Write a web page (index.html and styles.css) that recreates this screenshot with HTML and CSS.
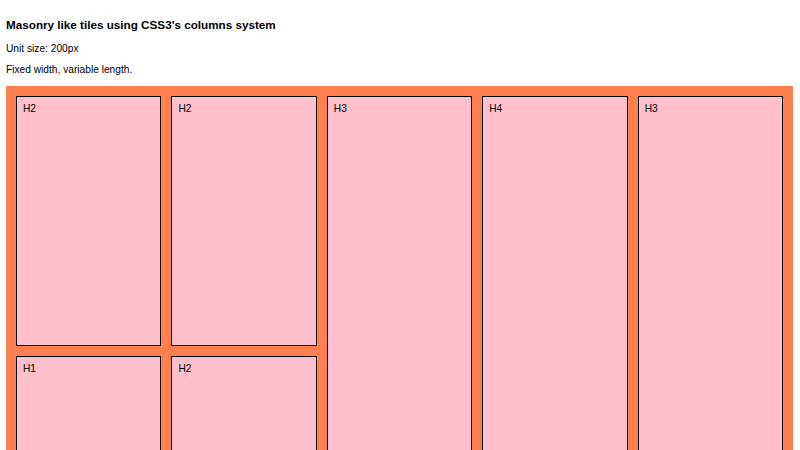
FILE: index.html
```html
<!DOCTYPE html>
<html>
<head>
<meta charset="utf-8">
<title>Masonry like tiles</title>
<link rel="stylesheet" href="styles.css">
</head>
<body>
<h1 class="title">Masonry like tiles using CSS3's columns system</h1>
<p class="note">Unit size: 200px</p>
<p class="note last">Fixed width, variable length.</p>
<div class="board">
  <div class="col">
    <div class="tile h2">H2</div>
    <div class="tile h1">H1</div>
    <div class="tile h2">H2</div>
  </div>
  <div class="col">
    <div class="tile h2">H2</div>
    <div class="tile h2">H2</div>
  </div>
  <div class="col">
    <div class="tile h3">H3</div>
    <div class="tile h2">H2</div>
  </div>
  <div class="col">
    <div class="tile h4">H4</div>
    <div class="tile h1">H1</div>
  </div>
  <div class="col">
    <div class="tile h3">H3</div>
    <div class="tile h2">H2</div>
  </div>
</div>
</body>
</html>
```
FILE: styles.css
```css
html, body {
  margin: 0;
  padding: 0;
  background: #ffffff;
}
body {
  padding: 0 6px;
  font-family: "Liberation Sans", Arial, sans-serif;
  color: #000;
}
.title {
  font-size: 11.7px;
  font-weight: bold;
  line-height: 14px;
  margin: 18px 0 10px;
}
.note {
  font-size: 10.2px;
  line-height: 13px;
  margin: 0 0 8px;
}
.note.last {
  margin-bottom: 10px;
}
.board {
  background: #ff7f50;
  padding: 10px;
  display: flex;
  gap: 10px;
  width: 767px;
  align-items: flex-start;
}
.col {
  flex: 1 1 0;
  min-width: 0;
  display: flex;
  flex-direction: column;
  gap: 10px;
}
.tile {
  box-sizing: border-box;
  background: #ffc0cb;
  border: 1px solid #000;
  padding: 5px 6px;
  font-size: 10.2px;
  line-height: 13px;
}
.h1 { height: 120px; }
.h2 { height: 250px; }
.h3 { height: 380px; }
.h4 { height: 510px; }
```
